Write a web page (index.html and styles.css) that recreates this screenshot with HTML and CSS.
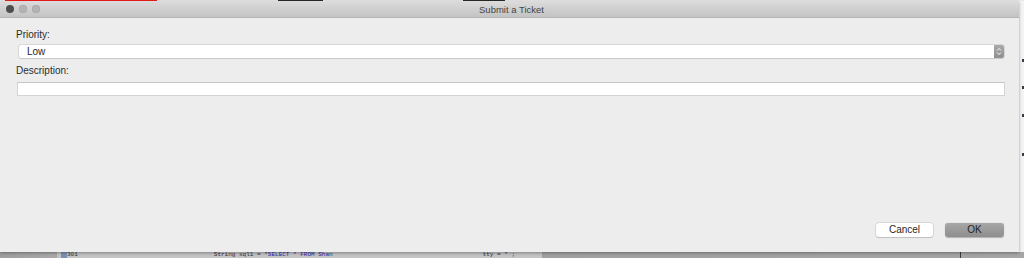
FILE: index.html
```html
<!DOCTYPE html>
<html>
<head>
<meta charset="utf-8">
<link rel="stylesheet" href="styles.css">
</head>
<body>
<div class="desktop">
  <div class="topstrip">
    <span class="seg red"></span>
    <span class="seg dark1"></span>
    <span class="seg dark2"></span>
  </div>
  <div class="middle">
    <div class="window">
      <div class="titlebar">
        <div class="lights">
          <span class="light close"></span>
          <span class="light"></span>
          <span class="light"></span>
        </div>
        <div class="title">Submit a Ticket</div>
      </div>
      <div class="content">
        <div class="label">Priority:</div>
        <div class="select">
          <span class="select-text">Low</span>
          <span class="stepper">
            <svg width="6" height="9" viewBox="0 0 6 9"><path d="M1 3.5 L3 1.5 L5 3.5 M1 5.5 L3 7.5 L5 5.5" fill="none" stroke="#fff" stroke-width="1"/></svg>
          </span>
        </div>
        <div class="label label-desc">Description:</div>
        <div class="field"></div>
        <div class="spacer"></div>
        <div class="buttons">
          <div class="btn btn-cancel">Cancel</div>
          <div class="btn btn-ok">OK</div>
        </div>
      </div>
    </div>
    <div class="rightstrip">
      <span class="tick t1"></span>
      <span class="tick t2"></span>
      <span class="tick t3"></span>
      <span class="tick t4"></span>
    </div>
  </div>
  <div class="bottomstrip">
    <div class="code">
      <span class="gutter"></span><span class="ln">301</span><span class="src">String sql1 = </span><span class="kw">"SELECT * FROM Shan</span><span class="src2">tty = </span><span class="kw">" ;</span>
    </div>
    <div class="code2"></div>
  </div>
</div>
</body>
</html>
```
FILE: styles.css
```css
html, body {
  margin: 0;
  padding: 0;
}
body {
  width: 1024px;
  height: 258px;
  overflow: hidden;
  font-family: "Liberation Sans", Arial, sans-serif;
}
.desktop {
  width: 1024px;
  height: 258px;
  display: flex;
  flex-direction: column;
  background: #f2f2f2;
}
.topstrip {
  height: 1px;
  position: relative;
  background: #eaeaea;
  flex: none;
}
.seg {
  position: absolute;
  top: 0;
  height: 1px;
}
.seg.red { left: 5px; width: 152px; background: #f21c1c; }
.seg.dark1 { left: 278px; width: 45px; background: #2a2a2a; }
.seg.dark2 { left: 463px; width: 42px; background: #2a2a2a; }

.middle {
  display: flex;
  flex: none;
  height: 251px;
}
.window {
  width: 1019px;
  height: 251px;
  background: #ededed;
  display: flex;
  flex-direction: column;
  box-shadow: 0 1px 3px rgba(0,0,0,0.35);
  position: relative;
  z-index: 2;
}
.titlebar {
  height: 16px;
  flex: none;
  background: linear-gradient(#dcdcdc, #cfcfcf 50%, #c4c4c4);
  border-bottom: 1px solid #b4b4b4;
  display: flex;
  align-items: center;
  position: relative;
}
.lights {
  display: flex;
  gap: 5px;
  padding-left: 6px;
}
.light {
  width: 8px;
  height: 8px;
  border-radius: 50%;
  background: #b3b3b3;
  box-shadow: inset 0 0 0 0.5px #a5a5a5;
}
.light.close {
  background: #4d4d4d;
  box-shadow: none;
}
.title {
  position: absolute;
  left: 0;
  right: 0;
  top: 3px;
  text-align: center;
  font-size: 9.5px;
  color: #454545;
  line-height: 11px;
  padding-left: 4px;
}
.content {
  flex: 1;
  display: flex;
  flex-direction: column;
  padding: 11px 15px 15px 16px;
}
.label {
  font-size: 10px;
  line-height: 12px;
  color: #2b2b2b;
}
.select {
  margin: 4px 0 0 3px;
  height: 13px;
  background: #fff;
  border-radius: 2px;
  box-shadow: 0 0 0 0.5px #c6c6c6, 0 0.5px 1px rgba(0,0,0,0.15);
  display: flex;
  align-items: center;
  justify-content: space-between;
}
.select-text {
  font-size: 10px;
  color: #1f1f1f;
  padding-left: 8px;
  line-height: 12px;
}
.stepper {
  width: 10px;
  height: 13px;
  background: linear-gradient(#a9a9a9, #8f8f8f);
  border-radius: 0 2px 2px 0;
  display: flex;
  align-items: center;
  justify-content: center;
}
.label-desc {
  margin-top: 7px;
}
.field {
  margin: 5px -1px 0 1px;
  height: 12px;
  background: #fff;
  border: 1px solid #d3d3d3;
  border-top-color: #c6c6c6;
  box-sizing: content-box;
  width: 986px;
}
.spacer {
  flex: 1;
}
.buttons {
  display: flex;
  justify-content: flex-end;
  gap: 12px;
}
.btn {
  height: 14px;
  font-size: 10px;
  line-height: 14px;
  text-align: center;
  border-radius: 3px;
  color: #1f1f1f;
}
.btn-cancel {
  width: 57px;
  background: #fff;
  box-shadow: 0 0 0 0.5px #c4c4c4, 0 0.5px 1px rgba(0,0,0,0.2);
}
.btn-ok {
  width: 59px;
  background: linear-gradient(#a7a7a7, #8e8e8e);
  box-shadow: 0 0.5px 1px rgba(0,0,0,0.25);
}

.rightstrip {
  flex: 1;
  position: relative;
  background: #f4f4f4;
}
.tick {
  position: absolute;
  left: 3px;
  width: 2px;
  height: 3px;
  background: #3a3a4a;
}
.t1 { top: 58px; }
.t2 { top: 85px; }
.t3 { top: 113px; }
.t4 { top: 152px; }

.bottomstrip {
  flex: 1;
  background: linear-gradient(90deg, #9e9e9e, #a8a8a8 5%, #a0a0a0 50%, #a6a6a6);
  display: flex;
  align-items: flex-start;
}
.code {
  margin-left: 57px;
  width: 485px;
  height: 6px;
  background: #c4c4c4;
  font-family: "Liberation Mono", monospace;
  font-size: 6px;
  line-height: 6px;
  color: #303030;
  white-space: pre;
  overflow: hidden;
  display: flex;
  align-items: center;
}
.code2 {
  margin-left: 418px;
  width: 1px;
  height: 6px;
  background: #3a3a3a;
}
.gutter {
  display: inline-block;
  width: 6px;
  height: 6px;
  background: #7d8fb5;
  margin-left: 4px;
}
.ln { margin-right: 136px; }
.src { color: #303040; }
.kw { color: #2a2aa8; }
.src2 { margin-left: 150px; }
```
